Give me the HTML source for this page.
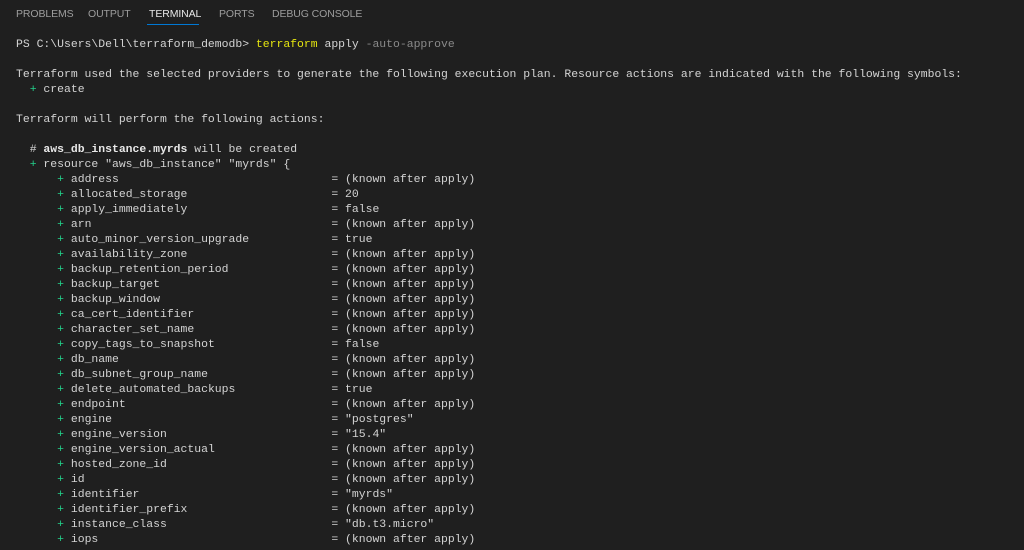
<!DOCTYPE html>
<html><head><meta charset="utf-8"><style>
html,body{margin:0;padding:0;background:#1f1f1f;width:1024px;height:550px;overflow:hidden}
.tabs{position:absolute;top:0;left:0;height:26px;width:1024px;font-family:"Liberation Sans",sans-serif;font-size:10.5px;color:#9d9d9d}
.tabs span{position:absolute;top:8px;letter-spacing:-0.1px}
.tabs .act{color:#e7e7e7}
.ul{position:absolute;left:147px;top:24px;width:52px;height:1px;background:#0078d4}
pre{position:absolute;left:16px;top:37px;margin:0;font-family:"Liberation Mono",monospace;font-size:11.43px;line-height:15px;color:#d4d4d4}
.g{color:#23d18b}.y{color:#e5e510}.d{color:#8a8a8a}b{font-weight:bold;color:#e8e8e8}
</style></head><body>
<div class="tabs">
<span style="left:16px">PROBLEMS</span>
<span style="left:88px">OUTPUT</span>
<span class="act" style="left:149px">TERMINAL</span>
<span style="left:219px">PORTS</span>
<span style="left:272px">DEBUG CONSOLE</span>
</div>
<div class="ul"></div>
<pre>PS C:\Users\Dell\terraform_demodb&gt; <span class="y">terraform</span> apply <span class="d">-auto-approve</span>

Terraform used the selected providers to generate the following execution plan. Resource actions are indicated with the following symbols:
  <span class="g">+</span> create

Terraform will perform the following actions:

  # <b>aws_db_instance.myrds</b> will be created
  <span class="g">+</span> resource "aws_db_instance" "myrds" {
      <span class="g">+</span> address                               = (known after apply)
      <span class="g">+</span> allocated_storage                     = 20
      <span class="g">+</span> apply_immediately                     = false
      <span class="g">+</span> arn                                   = (known after apply)
      <span class="g">+</span> auto_minor_version_upgrade            = true
      <span class="g">+</span> availability_zone                     = (known after apply)
      <span class="g">+</span> backup_retention_period               = (known after apply)
      <span class="g">+</span> backup_target                         = (known after apply)
      <span class="g">+</span> backup_window                         = (known after apply)
      <span class="g">+</span> ca_cert_identifier                    = (known after apply)
      <span class="g">+</span> character_set_name                    = (known after apply)
      <span class="g">+</span> copy_tags_to_snapshot                 = false
      <span class="g">+</span> db_name                               = (known after apply)
      <span class="g">+</span> db_subnet_group_name                  = (known after apply)
      <span class="g">+</span> delete_automated_backups              = true
      <span class="g">+</span> endpoint                              = (known after apply)
      <span class="g">+</span> engine                                = "postgres"
      <span class="g">+</span> engine_version                        = "15.4"
      <span class="g">+</span> engine_version_actual                 = (known after apply)
      <span class="g">+</span> hosted_zone_id                        = (known after apply)
      <span class="g">+</span> id                                    = (known after apply)
      <span class="g">+</span> identifier                            = "myrds"
      <span class="g">+</span> identifier_prefix                     = (known after apply)
      <span class="g">+</span> instance_class                        = "db.t3.micro"
      <span class="g">+</span> iops                                  = (known after apply)
</pre>
</body></html>
